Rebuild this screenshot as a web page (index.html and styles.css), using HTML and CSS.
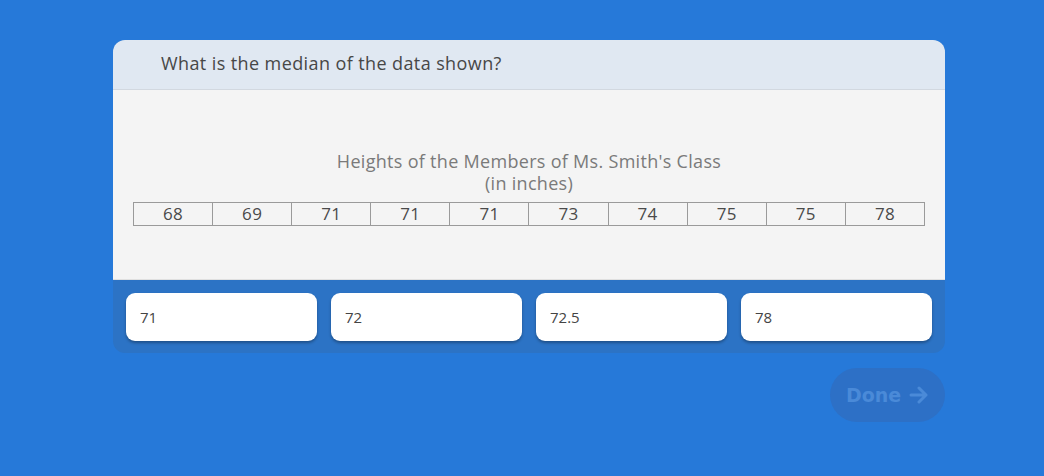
FILE: index.html
```html
<!DOCTYPE html>
<html>
<head>
<meta charset="utf-8">
<link rel="stylesheet" href="styles.css">
</head>
<body>
<div class="page">
  <div class="card">
    <div class="question">What is the median of the data shown?</div>
    <div class="content">
      <div class="caption">Heights of the Members of Ms. Smith's Class<br>(in inches)</div>
      <table class="data">
        <tr><td>68</td><td>69</td><td>71</td><td>71</td><td>71</td><td>73</td><td>74</td><td>75</td><td>75</td><td>78</td></tr>
      </table>
    </div>
    <div class="answers">
      <div class="answer">71</div>
      <div class="answer">72</div>
      <div class="answer">72.5</div>
      <div class="answer">78</div>
    </div>
  </div>
  <div class="actions">
    <div class="done">Done <svg width="20" height="18" viewBox="0 0 20 18"><path d="M2 9h15M10 2l7 7-7 7" fill="none" stroke="currentColor" stroke-width="3" stroke-linecap="round" stroke-linejoin="round"/></svg></div>
  </div>
</div>
</body>
</html>
```
FILE: styles.css
```css
html, body { margin: 0; padding: 0; }
body {
  background: #2679d9;
  font-family: "Open Sans", "DejaVu Sans", sans-serif;
  width: 1044px;
  height: 476px;
  overflow: hidden;
}
.page {
  padding: 40px 99px 0 113px;
}
.card {
  width: 832px;
  border-radius: 12px;
  overflow: hidden;
  background: #2c73c5;
}
.question {
  background: #e0e8f2;
  height: 50px;
  box-sizing: border-box;
  padding: 11px 0 0 48px;
  font-size: 18px;
  letter-spacing: 0.4px;
  color: #474747;
  border-bottom: 1px solid #d2d8e0;
}
.content {
  background: #f4f4f4;
  height: 190px;
  box-sizing: border-box;
  padding: 60px 20px 0 20px;
  border-bottom: 1px solid #e0e0e0;
}
.caption {
  text-align: center;
  color: #7a7a7a;
  font-size: 18px;
  letter-spacing: 0.3px;
  line-height: 22px;
}
.data {
  width: 792px;
  border-collapse: collapse;
  margin-top: 8px;
  table-layout: fixed;
}
.data td {
  border: 1px solid #9a9a9a;
  text-align: center;
  font-size: 17px;
  letter-spacing: 0.3px;
  color: #4a4a4a;
  height: 22px;
  padding: 0;
  line-height: 22px;
}
.answers {
  display: flex;
  gap: 14px;
  padding: 13px 13px 12px 13px;
}
.answer {
  flex: 1;
  height: 48px;
  background: #fff;
  border-radius: 9px;
  box-shadow: 0 2px 3px rgba(0, 0, 0, 0.3);
  display: flex;
  align-items: center;
  padding-left: 14px;
  font-size: 15px;
  color: #444;
}
.actions {
  width: 832px;
  display: flex;
  justify-content: flex-end;
  margin-top: 15px;
}
.done {
  width: 115px;
  height: 54px;
  border-radius: 27px;
  background: #2d70c6;
  color: #4a8ad8;
  font-family: "DejaVu Sans", sans-serif;
  font-weight: bold;
  font-size: 19px;
  display: flex;
  align-items: center;
  justify-content: center;
  gap: 8px;
}
.done svg { display: block; }
```
